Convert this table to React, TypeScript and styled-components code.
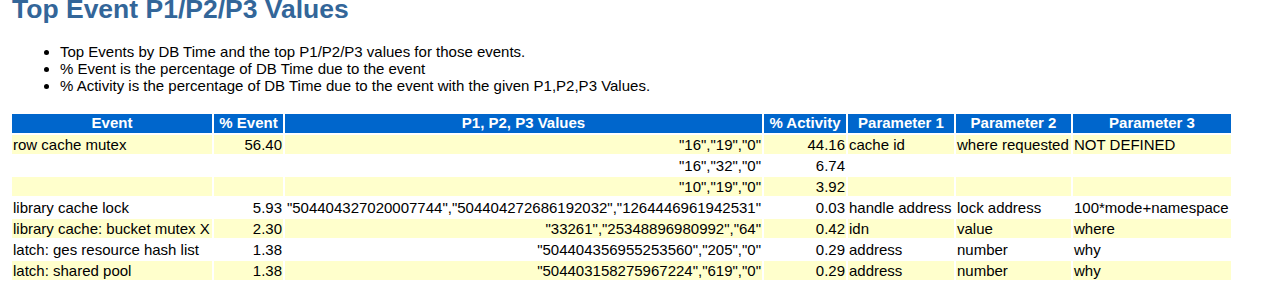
import React from "react";
import styled, { createGlobalStyle } from "styled-components";

const GlobalStyle = createGlobalStyle`
  html, body {
    margin: 0;
    padding: 0;
    background: #ffffff;
  }
  body {
    font-family: "Liberation Sans", Arial, Helvetica, sans-serif;
    color: #000000;
    overflow: hidden;
  }
`;

type Align = "left" | "right" | "center";

interface Column {
  title: string;
  width: number;
  align: Align;
}

const columns: Column[] = [
  { title: "Event", width: 200, align: "left" },
  { title: "% Event", width: 69, align: "right" },
  { title: "P1, P2, P3 Values", width: 477, align: "right" },
  { title: "% Activity", width: 82, align: "right" },
  { title: "Parameter 1", width: 106, align: "left" },
  { title: "Parameter 2", width: 115, align: "left" },
  { title: "Parameter 3", width: 158, align: "left" }
];

const rows: string[][] = [
  ["row cache mutex", "56.40", `"16","19","0"`, "44.16", "cache id", "where requested", "NOT DEFINED"],
  ["", "", `"16","32","0"`, "6.74", "", "", ""],
  ["", "", `"10","19","0"`, "3.92", "", "", ""],
  [
    "library cache lock",
    "5.93",
    `"504404327020007744","504404272686192032","1264446961942531"`,
    "0.03",
    "handle address",
    "lock address",
    "100*mode+namespace"
  ],
  ["library cache: bucket mutex X", "2.30", `"33261","25348896980992","64"`, "0.42", "idn", "value", "where"],
  ["latch: ges resource hash list", "1.38", `"504404356955253560","205","0"`, "0.29", "address", "number", "why"],
  ["latch: shared pool", "1.38", `"504403158275967224","619","0"`, "0.29", "address", "number", "why"]
];

const notes = [
  "Top Events by DB Time and the top P1/P2/P3 values for those events.",
  "% Event is the percentage of DB Time due to the event",
  "% Activity is the percentage of DB Time due to the event with the given P1,P2,P3 Values."
];

export default function App() {
  return (
    <Page>
      <GlobalStyle />
      <Heading>Top Event P1/P2/P3 Values</Heading>
      <Notes>
        {notes.map((n) => (
          <li key={n}>{n}</li>
        ))}
      </Notes>
      <Table>
        <colgroup>
          {columns.map((c) => (
            <col key={c.title} style={{ width: c.width }} />
          ))}
        </colgroup>
        <thead>
          <tr>
            {columns.map((c) => (
              <HeadCell key={c.title}>{c.title}</HeadCell>
            ))}
          </tr>
        </thead>
        <tbody>
          {rows.map((r, i) => (
            <Row key={i} $shaded={i % 2 === 0}>
              {r.map((v, j) => (
                <Cell key={j} $align={columns[j].align}>
                  {v}
                </Cell>
              ))}
            </Row>
          ))}
        </tbody>
      </Table>
    </Page>
  );
}

const Page = styled.div`
  padding-left: 10px;
  width: 1270px;
  box-sizing: border-box;
`;

const Heading = styled.h3`
  margin: -5px 0 0 2px;
  font-size: 26.5px;
  font-weight: bold;
  color: #336699;
  line-height: 29px;
`;

const Notes = styled.ul`
  margin: 19px 0 0 10px;
  padding-left: 40px;
  font-size: 15px;
  line-height: 17px;
  color: #000000;
  list-style: disc;
`;

const Table = styled.table`
  margin-top: 18px;
  width: 1223px;
  table-layout: fixed;
  border-collapse: separate;
  border-spacing: 2px;
  font-size: 15px;
`;

const HeadCell = styled.th`
  background: #0066cc;
  color: #ffffff;
  font-weight: bold;
  line-height: 17px;
  padding: 0 4px 2px;
  text-align: center;
  white-space: nowrap;
  overflow: hidden;
`;

const Row = styled.tr<{ $shaded: boolean }>`
  background: ${(p) => (p.$shaded ? "#ffffcc" : "#ffffff")};
`;

const Cell = styled.td<{ $align: Align }>`
  line-height: 17px;
  height: 17px;
  padding: 1px;
  text-align: ${(p) => p.$align};
  vertical-align: top;
  white-space: nowrap;
  overflow: hidden;
  color: #000000;
`;
